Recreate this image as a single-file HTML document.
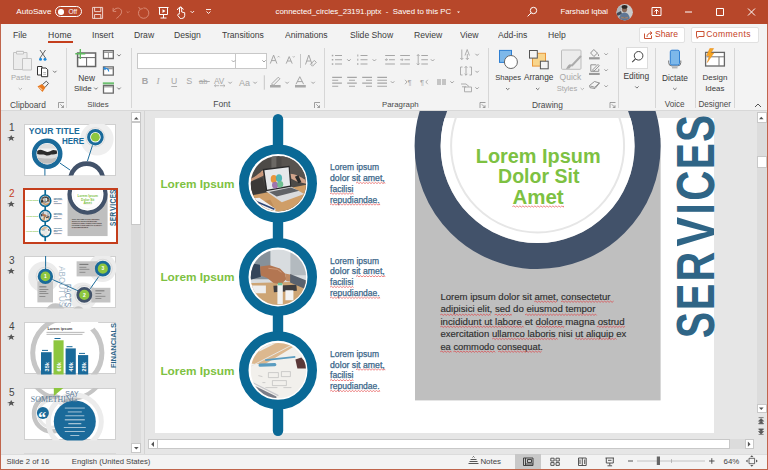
<!DOCTYPE html>
<html><head><meta charset="utf-8">
<style>
*{box-sizing:border-box;margin:0;padding:0}
html,body{width:768px;height:470px;overflow:hidden;background:#e6e6e6;font-family:"Liberation Sans",sans-serif;position:relative}
.a{position:absolute}
.t{position:absolute;white-space:nowrap;line-height:1}
svg{position:absolute;overflow:visible}
#title{left:0;top:0;width:768px;height:24px;background:#b7472a}
#tabs{left:1px;top:24px;width:766px;height:86px;background:#f3f3f3}
.tab{position:absolute;top:29.6px;font-size:9.7px;color:#3c3c3c;white-space:nowrap;line-height:1;transform:scaleX(0.89);transform-origin:0 0}
.grp{position:absolute;top:101px;font-size:8.3px;color:#555}
.sep{position:absolute;width:1px;background:#d6d6d6;top:48px;height:60px}
.rb{position:absolute;font-size:8.3px;color:#333;white-space:nowrap;line-height:1}
.dis{color:#a8a8a8}
</style></head><body>
<!-- window borders -->
<div class="a" style="left:0;top:0;width:1px;height:470px;background:#c0654c"></div>
<div class="a" style="right:0;top:0;width:1px;height:470px;background:#c0654c"></div>
<div class="a" style="left:0;top:469px;width:768px;height:1px;background:#c0654c"></div>

<div id="title" class="a"></div>
<div id="tabs" class="a"></div>


<!-- title bar content -->
<div class="t" style="left:16.3px;top:8.3px;font-size:8.1px;color:#fff">AutoSave</div>
<div class="a" style="left:55px;top:6px;width:27px;height:11px;border:1px solid #fff;border-radius:6px"></div>
<div class="a" style="left:58.4px;top:9.3px;width:5.3px;height:5.3px;background:#fff;border-radius:50%"></div>
<div class="t" style="left:68.6px;top:8.6px;font-size:6.6px;color:#fff;letter-spacing:-0.1px">Off</div>
<svg style="left:0;top:0" width="768" height="24">
 <g fill="none" stroke="#f4e2dc" stroke-width="0.9">
  <path d="M92.6 7.4h10v11h-10z"/>
  <path d="M94.6 7.4v4.2h6.2v-4.2"/>
  <path d="M94.6 18.4v-3.9h6.2v3.9"/>
 </g>
 <g fill="none" stroke="#d98a74" stroke-width="1">
  <path d="M113 11.2c2-3.5 6.5-4.2 8.2-1.2c1.3 2.4-0.5 5.5-4.8 8.4"/>
  <path d="M113.2 7.9l-0.2 3.3l3.2 0.3"/>
  <path d="M126.6 11.3l1.4 1.4l1.4-1.4" stroke-width="0.8"/>
  <path d="M140.2 9.2a5.2 5.2 0 1 0 3.2-1.3"/>
  <path d="M138.6 7l1.6 2.2l2.6-0.6"/>
 </g>
 <g fill="none" stroke="#fff" stroke-width="1">
  <path d="M158.5 7.5h10M159.5 7.5v7h8v-7M163.5 14.5v3.5M160.5 18h6"/>
  <path d="M162.5 9.2v3.8l3-1.9z" fill="#fff" stroke="none"/>
  <path d="M179.5 12.5v-4.5a1.1 1.1 0 0 1 2.2 0v4l3 0.7v3a3 3 0 0 1-3 2.8h-1.5l-2.5-3.2a0.9 0.9 0 0 1 1.4-1z"/>
  <path d="M177.2 10a3.4 3.4 0 0 1 6.3-0.5"/>
  <path d="M190.5 11l1.8 1.8l1.8-1.8" stroke-width="0.9"/>
  <path d="M206 9.5h5M206.5 11.5l2 2l2-2" stroke-width="0.9"/>
 </g>
 <g fill="none" stroke="#fff" stroke-width="1">
  <circle cx="533.5" cy="10.5" r="3.2"/>
  <path d="M531.2 12.8l-3.6 3.6"/>
  <path d="M652 7.5h9v8h-9z"/>
  <path d="M656.5 14v-4.5M654.5 11.5l2-2l2 2"/>
  <path d="M685 12h7"/>
  <path d="M716.5 8.5h7v7h-7z"/>
  <path d="M748 8.5l7 7M755 8.5l-7 7"/>
  <path d="M457 11.5h3l-1.5 1.6z" fill="#fff" stroke="none"/>
 </g>
 
</svg>
<svg style="left:0;top:0" width="768" height="24">
 <defs><clipPath id="av"><circle cx="624.7" cy="12.25" r="8.2"/></clipPath></defs>
 <g clip-path="url(#av)">
  <rect x="616" y="4" width="18" height="17" fill="#c9cacb"/>
  <rect x="616" y="4" width="5" height="17" fill="#aeb3b8"/>
  <path d="M617 13l4-2l1 3l-5 2z" fill="#3f4a58"/>
  <ellipse cx="624.5" cy="9.2" rx="2.6" ry="3" fill="#8a6a5a"/>
  <ellipse cx="624.5" cy="6.9" rx="3" ry="1.8" fill="#2a2624"/>
  <path d="M619 21c0-5 2-8.5 5.5-8.5s5.5 3.5 5.5 8.5z" fill="#5f7694"/>
  <path d="M621 17.5c2 0.5 5 0.5 7 0" stroke="#9a8070" stroke-width="1.3"/>
 </g>
</svg>
<div class="t" style="left:275.5px;top:8px;font-size:7.85px;color:#fff">connected_circles_23191.pptx&nbsp; - &nbsp;Saved to this PC</div>
<div class="t" style="left:560.4px;top:8px;font-size:7.8px;color:#fff">Farshad Iqbal</div>

<!-- tabs -->
<div class="tab" style="left:12.5px">File</div>
<div class="tab" style="left:47.5px;color:#333;letter-spacing:0.25px">Home</div>
<div class="a" style="left:47.5px;top:41px;width:25.5px;height:2px;background:#c43e1c"></div>
<div class="tab" style="left:91.8px">Insert</div>
<div class="tab" style="left:133.8px">Draw</div>
<div class="tab" style="left:173.8px">Design</div>
<div class="tab" style="left:221.5px">Transitions</div>
<div class="tab" style="left:285px">Animations</div>
<div class="tab" style="left:350px">Slide Show</div>
<div class="tab" style="left:413.5px">Review</div>
<div class="tab" style="left:459.8px">View</div>
<div class="tab" style="left:498.2px">Add-ins</div>
<div class="tab" style="left:548.2px">Help</div>
<div class="a" style="left:638.5px;top:26.5px;width:46px;height:16px;background:#fff;border:1px solid #e1e1e1;border-radius:2px"></div>
<div class="a" style="left:690.5px;top:26.5px;width:68px;height:16px;background:#fff;border:1px solid #e1e1e1;border-radius:2px"></div>
<div class="t" style="left:655px;top:30px;font-size:8.6px;color:#c43e1c">Share</div>
<div class="t" style="left:706.2px;top:30px;font-size:8.6px;letter-spacing:0.4px;color:#c43e1c">Comments</div>
<svg style="left:0;top:0" width="768" height="50">
 <g fill="none" stroke="#c43e1c" stroke-width="0.9">
  <path d="M644.5 33.5v5h7v-3"/>
  <path d="M647 37c0-2.5 1.5-4 4.5-4M650 31.5l2 1.5l-2 1.8"/>
  <path d="M696.5 31.5h7.5v5h-5l-2 1.8v-1.8h-0.5z"/>
 </g>
</svg>


<!-- ribbon: separators -->
<div class="sep" style="left:66px"></div>
<div class="sep" style="left:131px"></div>
<div class="sep" style="left:323.5px"></div>
<div class="sep" style="left:488px"></div>
<div class="sep" style="left:618px"></div>
<div class="sep" style="left:655px"></div>
<div class="sep" style="left:694.5px"></div>
<div class="sep" style="left:734px"></div>
<!-- group labels -->
<div class="rb" style="left:10.00px;top:100.62px;font-size:8.37px;color:#4a4a4a">Clipboard</div>
<div class="rb" style="left:87.23px;top:101.03px;font-size:7.89px;color:#4a4a4a">Slides</div>
<div class="rb" style="left:213.24px;top:100.45px;font-size:8.57px;color:#4a4a4a">Font</div>
<div class="rb" style="left:382.03px;top:101.06px;font-size:7.85px;color:#4a4a4a">Paragraph</div>
<div class="rb" style="left:531.99px;top:100.57px;font-size:8.43px;color:#4a4a4a">Drawing</div>
<div class="rb" style="left:664.71px;top:100.81px;font-size:8.14px;color:#4a4a4a">Voice</div>
<div class="rb" style="left:698.41px;top:100.81px;font-size:8.15px;color:#4a4a4a">Designer</div>
<div class="rb" style="left:10.94px;top:74.11px;font-size:7.67px;color:#a8a8a8">Paste</div>
<div class="rb" style="left:78.30px;top:73.50px;font-size:8.39px;color:#3a3a3a">New</div>
<div class="rb" style="left:73.92px;top:84.79px;font-size:8.05px;color:#3a3a3a">Slide</div>
<div class="rb" style="left:495.24px;top:74.14px;font-size:7.64px;color:#3a3a3a">Shapes</div>
<div class="rb" style="left:524.00px;top:73.61px;font-size:8.26px;color:#3a3a3a">Arrange</div>
<div class="rb" style="left:559.59px;top:73.38px;font-size:8.53px;color:#a8a8a8">Quick</div>
<div class="rb" style="left:556.65px;top:85.30px;font-size:7.57px;color:#a8a8a8">Styles</div>
<div class="rb" style="left:623.49px;top:72.46px;font-size:8.44px;color:#3a3a3a">Editing</div>
<div class="rb" style="left:661.90px;top:73.54px;font-size:8.35px;color:#3a3a3a">Dictate</div>
<div class="rb" style="left:702.52px;top:73.86px;font-size:7.97px;color:#3a3a3a">Design</div>
<div class="rb" style="left:705.13px;top:85.06px;font-size:7.85px;color:#3a3a3a">Ideas</div>
<!-- clipboard -->
<!-- font boxes -->
<div class="a" style="left:136.5px;top:53px;width:99px;height:15.5px;background:#fff;border:1px solid #c8c8c8"></div>
<div class="a" style="left:235px;top:53px;width:31.5px;height:15.5px;background:#fff;border:1px solid #c8c8c8"></div>
<!-- editing box -->
<div class="a" style="left:626px;top:47px;width:21.5px;height:21.5px;background:#fff;border:1px solid #dcdcdc"></div>
<svg style="left:0;top:44px" width="768" height="66">
 <g transform="translate(0,-44)">
 <!-- dropdown arrows (small chevrons) -->
 <g fill="none" stroke="#666" stroke-width="0.9">
  <path d="M18.6 88.0l1.7 1.7l1.7-1.7" stroke="#b0b0b0"/>
  <path d="M53.1 70.8l1.7 1.7l1.7-1.7"/>
  <path d="M94.2 87.6l1.7 1.7l1.7-1.7"/>
  <path d="M117.3 54.4l1.7 1.7l1.7-1.7"/>
  <path d="M117.3 87.6l1.7 1.7l1.7-1.7"/>
  <path d="M506.0 88.0l1.7 1.7l1.7-1.7"/>
  <path d="M536.0 88.0l1.7 1.7l1.7-1.7"/>
  <path d="M580.6 88.0l1.7 1.7l1.7-1.7" stroke="#b0b0b0"/>
  <path d="M635.2 86.4l1.7 1.7l1.7-1.7"/>
  <path d="M673.2 88.0l1.7 1.7l1.7-1.7"/>
 </g>
 <g fill="none" stroke="#999" stroke-width="0.9">
  <path d="M231.8 60.3l1.7 1.7l1.7-1.7"/>
  <path d="M262.3 60.3l1.7 1.7l1.7-1.7"/>
  <path d="M228.4 81.8l1.7 1.7l1.7-1.7"/>
  <path d="M253.4 81.8l1.7 1.7l1.7-1.7"/>
  <path d="M285.4 81.8l1.7 1.7l1.7-1.7"/>
  <path d="M311.4 81.8l1.7 1.7l1.7-1.7"/>
  <path d="M347.2 59.3l1.7 1.7l1.7-1.7"/>
  <path d="M372.7 59.3l1.7 1.7l1.7-1.7"/>
  <path d="M430.9 59.3l1.7 1.7l1.7-1.7"/>
  <path d="M390.9 81.3l1.7 1.7l1.7-1.7"/>
  <path d="M450.4 81.3l1.7 1.7l1.7-1.7"/>
  <path d="M475.4 53.8l1.7 1.7l1.7-1.7"/>
  <path d="M475.4 70.8l1.7 1.7l1.7-1.7"/>
  <path d="M475.4 87.3l1.7 1.7l1.7-1.7"/>
  <path d="M604.4 53.3l1.7 1.7l1.7-1.7"/>
  <path d="M604.4 69.3l1.7 1.7l1.7-1.7"/>
  <path d="M604.4 85.3l1.7 1.7l1.7-1.7"/>
 </g>
 <!-- launchers -->
 <g fill="none" stroke="#888" stroke-width="0.8">
  <path d="M58.5 108v-5.5h5.5M60.3 104.3l3.2 3.2M63.5 105.3v2.2h-2.2"/>
  <path d="M314.5 108v-5.5h5.5M316.3 104.3l3.2 3.2M319.5 105.3v2.2h-2.2"/>
  <path d="M480 108v-5.5h5.5M481.8 104.3l3.2 3.2M485 105.3v2.2h-2.2"/>
  <path d="M610 108v-5.5h5.5M611.8 104.3l3.2 3.2M615 105.3v2.2h-2.2"/>

 </g>
 <path d="M755 107l3-3l3 3" fill="none" stroke="#555" stroke-width="1"/>

 <!-- paste -->
 <g fill="#ececec" stroke="#c4c4c4" stroke-width="1">
  <path d="M13.5 52.5h3v-1.2h7v1.2h3.5v17h-13.5z"/>
  <path d="M16.5 51.5h7v2.5h-7z" fill="#f3f3f3"/>
  <path d="M22.5 58.5h9v11.5h-9z" fill="#f0f0f0"/>
 </g>
 <!-- scissors -->
 <g fill="none" stroke="#555" stroke-width="0.9">
  <path d="M40 50l5.5 8M45.5 50l-5.5 8"/>
 </g>
 <circle cx="40.5" cy="59.3" r="1.5" fill="#1e88d8"/>
 <circle cx="45" cy="59.3" r="1.5" fill="#1e88d8"/>
 <!-- copy -->
 <g fill="#fff" stroke="#333" stroke-width="1">
  <path d="M37.5 66.5h4.5v8.5h-4.5z"/>
  <path d="M41.5 68h4.5l1.7 1.7v7h-6.2z"/>
 </g>
 <path d="M43.2 72.5h2.8M43.2 74.3h2.8" stroke="#888" stroke-width="0.6"/>
 <!-- format painter -->
 <path d="M37.5 86.5l4.5-2.5l3.5 3.5l-3 4.5z" fill="#e97b20"/>
 <path d="M39.6 87.3l2.6 2.6" stroke="#fff" stroke-width="0.8"/>
 <path d="M42.5 84.5l3.8-3.3l2.2 2.2l-3.3 3.8" fill="none" stroke="#444" stroke-width="0.9"/>

 <!-- new slide -->
 <path d="M77.6 53h18v13.5h-18z" fill="#fff" stroke="#666" stroke-width="1.5"/>
 <path d="M86.6 57.6v9M77.6 57.6h18" stroke="#666" stroke-width="1"/>
 <path d="M80.3 49v10M75.3 53.8h10" stroke="#5cb85c" stroke-width="1.4"/>
 <!-- layout -->
 <path d="M103.5 50.7h9.8v7.8h-9.8z" fill="#fff" stroke="#6a6a6a" stroke-width="1.3"/>
 <path d="M104 52.3h9" stroke="#9a9a9a" stroke-width="1.4"/>
 <path d="M108.4 53v5" stroke="#9a9a9a" stroke-width="1"/>
 <!-- reset -->
 <path d="M103.5 66.9h9.8v8.3h-9.8z" fill="#fff" stroke="#6a6a6a" stroke-width="1.3"/>
 <path d="M107 68.6h6" stroke="#9a9a9a" stroke-width="1.4"/>
 <path d="M104.2 68.6c2.2-0.8 4.5 0.3 4.5 3" stroke="#2b88d8" stroke-width="1.2" fill="none"/>
 <path d="M105.2 66.8l-1.5 1.9l2 1.2" stroke="#2b88d8" stroke-width="1.1" fill="none"/>
 <!-- section -->
 <path d="M103.5 85.3h9.8v7.8h-9.8z" fill="#fff" stroke="#6a6a6a" stroke-width="1.3"/>
 <path d="M104 86.8h9" stroke="#9a9a9a" stroke-width="1.2"/>
 <path d="M102.8 83.3h11.2" stroke="#6cc070" stroke-width="2"/>
 </g>
</svg>


<svg style="left:0;top:0" width="768" height="110">
 <!-- FONT group (disabled gray) -->
 <g fill="none" stroke="#a6a6a6" stroke-width="1">
  <!-- grow A -->
  <path d="M270.3 63.6l3.3-8.5l3.3 8.5M271.6 60.6h4"/>
  <path d="M277.6 57.3l1-1.1l1 1.1" stroke-width="0.8"/>
  <path d="M286.2 63.6l3-7l3 7M287.4 61h3.6"/>
  <path d="M292.8 56.3l0.9 1l0.9-1" stroke-width="0.8"/>
  <path d="M300.5 54v14" stroke="#c6c6c6"/>
  <path d="M305.5 64.5l3.3-9.5l3.3 9.5M306.8 61h4"/>
  <path d="M310.5 64.2l3.8-3.8l2 2l-3.8 3.8z"/>
  <path d="M264.3 75.3v14.4" stroke="#c6c6c6"/>
  <!-- highlighter -->
  <path d="M272 83.5l6.3-6.3l1.6 1.6l-6.3 6.3h-1.6z"/>
  <path d="M296 84.2l3.8-7.5l3.8 7.5M297.2 81.6h5.2"/>
  <!-- AV arrows -->
  <path d="M214.5 85.7h4.5M219.8 85.7h5M215.8 84.5l-1.3 1.2l1.3 1.2M223.6 84.5l1.3 1.2l-1.3 1.2" stroke-width="0.8"/>
  <path d="M171.3 86.5h5.8" stroke-width="0.9"/>
  <path d="M198.8 81.5h11" stroke-width="0.9"/>
 </g>
 <rect x="270" y="85" width="10.6" height="2.5" fill="#a8a8a8"/>
 <rect x="295" y="85" width="10.8" height="2.5" fill="#a8a8a8"/>
 <g font-family="Liberation Sans" fill="#a6a6a6">
  <text x="141.8" y="84.4" font-size="9" font-weight="700">B</text>
  <text x="156.4" y="84.4" font-size="9.2" font-style="italic" font-family="Liberation Serif">I</text>
  <text x="171" y="84.4" font-size="8.6">U</text>
  <text x="186.2" y="84.4" font-size="9">S</text>
  <text x="199" y="84.4" font-size="7.5">ab</text>
  <text x="214" y="83.6" font-size="8.2">AV</text>
  <text x="239" y="86" font-size="9">Aa</text>
 </g>
 <!-- PARAGRAPH group -->
 <g stroke="#a6a6a6" stroke-width="1.1" fill="none">
  <path d="M335 55.5h7M335 59.7h7M335 64h7"/>
  <path d="M360.5 55.5h7M360.5 59.7h7M360.5 64h7"/>
  <path d="M385.2 55.5h9.7M389 59.7h5.9M385.2 64h9.7"/>
  <path d="M400.2 55.5h9.7M404.5 59.7h5.4M400.2 64h9.7"/>
  <path d="M421.3 55.5h6.6M421.3 59.7h6.6M421.3 64h6.6"/>
  <path d="M332.2 77.4h9.7M332.2 80.2h6M332.2 83.1h9.7M332.2 86.3h6"/>
  <path d="M347.2 77.4h9.6M349 80.2h6M347.2 83.1h9.6M349 86.3h6"/>
  <path d="M362.2 77.4h9.8M366 80.2h6M362.2 83.1h9.8M366 86.3h6"/>
  <path d="M377.3 77.4h9.7M377.3 80.2h9.7M377.3 83.1h9.7M377.3 86.3h9.7"/>
 </g>
 <g fill="#a6a6a6">
  <rect x="331.8" y="54.8" width="1.5" height="1.5"/><rect x="331.8" y="59" width="1.5" height="1.5"/><rect x="331.8" y="63.3" width="1.5" height="1.5"/>
  <rect x="357.3" y="54.5" width="1" height="2"/><rect x="357.3" y="58.7" width="1" height="2"/><rect x="357.3" y="63" width="1" height="2"/>
 </g>
 <g stroke="#a6a6a6" stroke-width="0.9" fill="none">
  <path d="M388 59.7h-2.6M386.6 58.5l-1.2 1.2l1.2 1.2"/>
  <path d="M400.2 59.7h2.6M401.8 58.5l1.2 1.2l-1.2 1.2"/>
  <path d="M418.2 54.5v10.5M416.8 56l1.4-1.5l1.4 1.5M416.8 63.5l1.4 1.5l1.4-1.5"/>
  <path d="M405 79.8l2 2.2l-2 2.2"/>
  <path d="M427.8 79.8l-2 2.2l2 2.2"/>
  <path d="M461.8 49.5v10M460.3 58l1.5 1.6l1.5-1.6M467.3 54v5.5M465.8 58l1.5 1.6l1.5-1.6M465 55.5l2.2-6l2.2 6"/>
  <path d="M462.5 67h-2v8h2M469.5 67h2v8h-2M466 66.3v9M464.6 67.8l1.4-1.4l1.4 1.4M464.6 73.8l1.4 1.4l1.4-1.4"/>
  <path d="M461 84h5l3 2.5M462 86.8h4M464.5 87h7v4.8h-7z"/>
 </g>
 <g font-family="Liberation Sans" fill="#a6a6a6" font-size="7.5">
  <text x="407.5" y="85">¶</text>
  <text x="420" y="85">¶</text>
 </g>
 <g fill="#c4c4c4">
  <rect x="437" y="79" width="4" height="6"/><rect x="442" y="79" width="4" height="6"/>
 </g>
 <!-- DRAWING group -->
 <rect x="499.5" y="50.4" width="12" height="12" fill="#7db8ea" stroke="#2e7fd2" stroke-width="1"/>
 <circle cx="510.9" cy="62" r="6.5" fill="#fff" stroke="#666" stroke-width="1"/>
 <rect x="532.5" y="53.3" width="13" height="12.8" fill="#f8d58c" stroke="#e8963a" stroke-width="1"/>
 <rect x="529.5" y="50.5" width="7.8" height="7.6" fill="#f4f4f4" stroke="#555" stroke-width="1"/>
 <rect x="540.4" y="61.2" width="7.8" height="7.6" fill="#f4f4f4" stroke="#555" stroke-width="1"/>
 <rect x="561.5" y="50" width="19.5" height="19.3" rx="1" fill="#ececec" stroke="#bdbdbd" stroke-width="1"/>
 <path d="M580.5 56.5l-8.5 9" stroke="#ababab" stroke-width="2" fill="none" stroke-linecap="round"/>
 <path d="M572.3 64.8l-2.8 3.6l-3.5 0.6c1-1.6 1.6-3.6 3.6-4.8z" fill="#a8a8a8"/>
 <g fill="none" stroke="#888" stroke-width="0.9">
  <path d="M590.6 53l3.2-3.5l3.6 3.6l-3.5 3.4z"/>
  <path d="M597.5 53.5c0.8 0.6 1.2 1.4 1.1 2.5"/>
  <path d="M590.8 64.8h5.5M590.8 64.8v6.5h8v-2.5"/>
  <path d="M592.5 70l5.5-5.5l1.3 1.3l-5.5 5.5z"/>
  <path d="M589.5 85.5l5-4l5 1.5l-4.5 5.5l-5-0.8z"/>
  <path d="M590.3 86l4.5 1.3l4.6-4.4"/>
 </g>
 <rect x="589" y="57.2" width="10.7" height="2.2" fill="#999"/>
 <rect x="589" y="72.9" width="10.7" height="2.1" fill="#999"/>
 <!-- EDITING -->
 <circle cx="638.6" cy="55.8" r="4.3" fill="none" stroke="#444" stroke-width="1"/>
 <path d="M635.5 58.9l-3.3 3.3" stroke="#444" stroke-width="1.1"/>
 <!-- DICTATE -->
 <path d="M668.7 60.5v2.2a3.2 3.2 0 0 0 3.2 3.2h5.7a3.2 3.2 0 0 0 3.2-3.2v-2.2" fill="none" stroke="#666" stroke-width="0.9"/>
 <rect x="670.3" y="50.2" width="9.2" height="14.8" rx="1.6" fill="#7db8ea" stroke="#2e7fd2" stroke-width="1"/>
 <path d="M672 67.8h5.5" stroke="#999" stroke-width="1"/>
 <!-- DESIGN IDEAS -->
 <rect x="705.6" y="52.4" width="18.8" height="13.6" fill="#fff" stroke="#666" stroke-width="1.3"/>
 <path d="M706.5 56.8h17.5M719 56.8v9" stroke="#777" stroke-width="1"/>
 <path d="M709.8 48.5h3.8l-2.8 4.5h3l-6.5 9.5l2-6.8h-2.8z" fill="#f5a623" stroke="#e8891a" stroke-width="0.5"/>
</svg>
<div class="rb" style="left:495.5px;top:74.5px;display:none"></div>

<!-- workspace -->
<div class="a" style="left:1px;top:110px;width:766px;height:1px;background:#d8d8d8"></div>
<div class="a" style="left:144px;top:111px;width:1px;height:343px;background:#d4d4d4"></div>


<!-- main scrollbars -->
<div class="a" style="left:756.5px;top:112px;width:10px;height:292px;background:#dcdcdc"></div>
<div class="a" style="left:756.5px;top:112.4px;width:10px;height:10.3px;background:#fff;border:1px solid #c8c8c8"></div>
<div class="a" style="left:756.5px;top:155.7px;width:10px;height:12.8px;background:#fff;border:1px solid #c8c8c8"></div>
<div class="a" style="left:756.5px;top:403.9px;width:10px;height:9.6px;background:#fff;border:1px solid #c8c8c8"></div>
<div class="a" style="left:147.5px;top:439.2px;width:606px;height:10px;background:#dcdcdc"></div>
<div class="a" style="left:147.5px;top:439.2px;width:10px;height:10px;background:#fff;border:1px solid #c8c8c8"></div>
<div class="a" style="left:157.4px;top:439.2px;width:572.3px;height:10px;background:#fff;border:1px solid #c8c8c8"></div>
<div class="a" style="left:744.5px;top:439.2px;width:9px;height:10px;background:#fff;border:1px solid #c8c8c8"></div>
<svg style="left:0;top:0" width="768" height="470">
 <path d="M759 119.3l2.3-2.5l2.3 2.5z" fill="#555"/>
 <path d="M759 407.6l2.3 2.4l2.3-2.4z" fill="#555"/>
 <path d="M758.6 417.6h5M758.6 421.2l2.5-2.6l2.5 2.6zM758.6 423.8l2.5-2.6l2.5 2.6z" fill="#555" stroke="#555" stroke-width="0.7"/>
 <path d="M758.6 434.4h5M758.6 428.9l2.5 2.6l2.5-2.6zM758.6 431.5l2.5 2.6l2.5-2.6z" fill="#555" stroke="#555" stroke-width="0.7"/>
 <path d="M151.2 444.2l2.8-2.7v5.4z" fill="#555"/>
 <path d="M747.9 441.6l2.6 2.6l-2.6 2.6z" fill="#555"/>
</svg>

<!-- status bar -->
<div class="a" style="left:1px;top:454px;width:766px;height:15px;background:#f3f3f3;border-top:1px solid #dcdcdc"></div>



<!-- slide panel -->
<div class="a" style="left:1px;top:111px;width:143px;height:343px;overflow:hidden">
<div class="t" style="left:8.0px;top:12.2px;font-size:10px;color:#444">1</div>
<svg style="left:6.3px;top:24.2px" width="9" height="7"><path d="M4.2 0l1.1 2.1h2.4l-1.9 1.5l0.8 2.4l-2.4-1.4l-2.4 1.4l0.8-2.4l-1.9-1.5h2.4z" fill="#555"/><path d="M0 2.2l1.3 0.8M0.5 4l1.2-0.3" stroke="#aaa" stroke-width="0.5"/></svg>
<div class="t" style="left:8.0px;top:77.9px;font-size:10px;color:#c43e1c">2</div>
<svg style="left:6.3px;top:89.9px" width="9" height="7"><path d="M4.2 0l1.1 2.1h2.4l-1.9 1.5l0.8 2.4l-2.4-1.4l-2.4 1.4l0.8-2.4l-1.9-1.5h2.4z" fill="#555"/><path d="M0 2.2l1.3 0.8M0.5 4l1.2-0.3" stroke="#aaa" stroke-width="0.5"/></svg>
<div class="t" style="left:8.0px;top:144.5px;font-size:10px;color:#444">3</div>
<svg style="left:6.3px;top:156.5px" width="9" height="7"><path d="M4.2 0l1.1 2.1h2.4l-1.9 1.5l0.8 2.4l-2.4-1.4l-2.4 1.4l0.8-2.4l-1.9-1.5h2.4z" fill="#555"/><path d="M0 2.2l1.3 0.8M0.5 4l1.2-0.3" stroke="#aaa" stroke-width="0.5"/></svg>
<div class="t" style="left:8.0px;top:210.5px;font-size:10px;color:#444">4</div>
<svg style="left:6.3px;top:222.5px" width="9" height="7"><path d="M4.2 0l1.1 2.1h2.4l-1.9 1.5l0.8 2.4l-2.4-1.4l-2.4 1.4l0.8-2.4l-1.9-1.5h2.4z" fill="#555"/><path d="M0 2.2l1.3 0.8M0.5 4l1.2-0.3" stroke="#aaa" stroke-width="0.5"/></svg>
<div class="t" style="left:8.0px;top:276.5px;font-size:10px;color:#444">5</div>
<svg style="left:6.3px;top:288.5px" width="9" height="7"><path d="M4.2 0l1.1 2.1h2.4l-1.9 1.5l0.8 2.4l-2.4-1.4l-2.4 1.4l0.8-2.4l-1.9-1.5h2.4z" fill="#555"/><path d="M0 2.2l1.3 0.8M0.5 4l1.2-0.3" stroke="#aaa" stroke-width="0.5"/></svg>
<div class="t" style="left:8.0px;top:342.5px;font-size:10px;color:#444">6</div>
<svg style="left:6.3px;top:354.5px" width="9" height="7"><path d="M4.2 0l1.1 2.1h2.4l-1.9 1.5l0.8 2.4l-2.4-1.4l-2.4 1.4l0.8-2.4l-1.9-1.5h2.4z" fill="#555"/><path d="M0 2.2l1.3 0.8M0.5 4l1.2-0.3" stroke="#aaa" stroke-width="0.5"/></svg>
<div class="a" style="left:23.3px;top:12.6px;width:92.2px;height:52.6px;border:1px solid #d0d0d0;background:#fff"></div>
<div class="a" style="left:23.3px;top:144.6px;width:92.2px;height:52.6px;border:1px solid #d0d0d0;background:#fff"></div>
<div class="a" style="left:23.3px;top:210.6px;width:92.2px;height:52.6px;border:1px solid #d0d0d0;background:#fff"></div>
<div class="a" style="left:23.3px;top:276.6px;width:92.2px;height:52.6px;border:1px solid #d0d0d0;background:#fff"></div>
<div class="a" style="left:21.6px;top:76.9px;width:95.3px;height:56px;border:2px solid #c43e1c;background:#fff"></div>

<svg style="left:23.3px;top:12.6px" width="91.2" height="51.6" viewBox="0 0 91.2 51.6">
 <defs><clipPath id="t1c"><rect x="0" y="0" width="91.2" height="51.6"/></clipPath></defs>
 <g clip-path="url(#t1c)"><g transform="translate(-24.3,-123.6)">
  <circle cx="97.3" cy="138.5" r="16.6" fill="#efefef"/>
  <circle cx="95.7" cy="136.8" r="9.5" fill="none" stroke="#cfcfcf" stroke-width="0.6"/>
  <path d="M92.8 144.9L87.7 160.8" stroke="#1a6a9a" stroke-width="1"/>
  <path d="M60.3 162.7L70.5 169.7" stroke="#1a6a9a" stroke-width="1"/>
  <path d="M45.2 168L45.2 176" stroke="#1a6a9a" stroke-width="1"/>
  <circle cx="87" cy="179.6" r="16.4" fill="#fff" stroke="#42526a" stroke-width="4.6"/>
  <circle cx="95.7" cy="136.8" r="6.8" fill="#fff" stroke="#1a6a9a" stroke-width="3"/>
  <circle cx="95.7" cy="136.8" r="4.4" fill="#8dc63f"/>
  <circle cx="47.5" cy="153.4" r="13" fill="#fff" stroke="#1a6a9a" stroke-width="4.6"/>
  <clipPath id="t1p"><circle cx="47.5" cy="153.4" r="10.6"/></clipPath><g clip-path="url(#t1p)">
  <circle cx="47.5" cy="153.4" r="10.6" fill="#dedede"/>
  <path d="M37 148h21v4h-21z" fill="#f2f2f2"/>
  <path d="M37.5 150.5c2-1.5 4-1.5 6-0.5l4 1.5c2 0 4-1.5 6-2l3.5 0.5l0.5 3c-2 1-4 1.5-6 1c-2 1-4 1.5-6 0.5c-2-1-5 0-8-1z" fill="#2c2c2c"/>
  <path d="M38 157c5 1 12 2 19 0v6h-19z" fill="#bdbdbd"/></g>
  <text x="29" y="133.6" font-family="Liberation Sans" font-weight="700" font-size="9" fill="#1a6a9a" textLength="51" lengthAdjust="spacingAndGlyphs">YOUR TITLE</text>
  <text x="62.2" y="143.9" font-family="Liberation Sans" font-weight="700" font-size="9" fill="#1a6a9a" textLength="22.3" lengthAdjust="spacingAndGlyphs">HERE</text>
 </g></g>
</svg>

<svg style="left:23.6px;top:79px" width="91.3" height="51.4" viewBox="0 0 560 315">
 <defs><clipPath id="t2c"><rect x="0" y="0" width="560" height="315"/></clipPath></defs>
 <g clip-path="url(#t2c)"><use href="#slide2"/></g>
</svg>

<svg style="left:23.6px;top:144.6px" width="91.8" height="52.5" viewBox="0 0 91.8 52.5">
 <defs><clipPath id="t3c"><rect x="0" y="0" width="91.8" height="52.5"/></clipPath></defs>
 <g clip-path="url(#t3c)"><g transform="translate(-24.6,-255.6)">
  <circle cx="43.4" cy="276.5" r="15.5" fill="#ececec"/>
  <circle cx="102" cy="267.6" r="14" fill="#ececec"/>
  <circle cx="82.5" cy="296" r="14" fill="#ececec"/>
  <path d="M46 308.5a10 10 0 0 1 18 0z" fill="#c4c4c4"/>
  <path d="M73 308.5a6 6 0 0 1 10 0z" fill="#c4c4c4"/>
  <rect x="37" y="281" width="15.6" height="21" fill="#c4c4c4"/>
  <rect x="76.2" y="260.9" width="21.1" height="15.1" fill="#c4c4c4"/>
  <rect x="90.9" y="287.4" width="19.1" height="14.7" fill="#c4c4c4"/>
  <g fill="#6a6a6a"><rect x="39" y="286" width="7" height="0.9"/><rect x="39" y="289" width="9" height="0.6"/><rect x="39" y="291" width="7" height="0.6"/><rect x="39" y="293" width="9" height="0.6"/><rect x="39" y="296" width="6" height="0.6"/>
  <rect x="79" y="263.5" width="9" height="0.9"/><rect x="79" y="266.5" width="7" height="0.6"/><rect x="79" y="268.5" width="10" height="0.6"/><rect x="79" y="271.5" width="6" height="0.6"/>
  <rect x="95" y="290" width="9" height="0.9"/><rect x="95" y="293" width="6" height="0.6"/><rect x="95" y="295.5" width="10" height="0.6"/><rect x="95" y="298" width="6" height="0.6"/></g>
  <path d="M45.2 255.6V276M52 279.1L78.1 290.6M98.5 276L89.6 288.7" stroke="#1a6a9a" stroke-width="1"/>
  <text transform="translate(58.4,265.8) rotate(90)" font-family="Liberation Sans" font-size="8.8" fill="#a8bccc" textLength="41" lengthAdjust="spacingAndGlyphs">ABOUT US</text>
  <text transform="translate(64.5,283.6) rotate(90)" font-family="Liberation Sans" font-size="8.8" fill="#6f8ea8" textLength="23" lengthAdjust="spacingAndGlyphs">FACTS</text>
  <circle cx="45" cy="276" r="9.3" fill="none" stroke="#c8c8c8" stroke-width="0.5"/>
  <circle cx="83.9" cy="294.5" r="9.5" fill="none" stroke="#c8c8c8" stroke-width="0.5"/>
  <circle cx="102.4" cy="268.3" r="9.5" fill="none" stroke="#c8c8c8" stroke-width="0.5"/>
  <circle cx="45" cy="276" r="6.3" fill="#8dc63f" stroke="#1a6a9a" stroke-width="2.8"/>
  <circle cx="83.9" cy="294.5" r="6.5" fill="#8dc63f" stroke="#42526a" stroke-width="2.8"/>
  <circle cx="102.4" cy="268.3" r="6.5" fill="#8dc63f" stroke="#1a6a9a" stroke-width="2.8"/>
  <g font-family="Liberation Sans" font-weight="700" font-size="5" fill="#fff" text-anchor="middle">
   <text x="45" y="277.8">1</text><text x="83.9" y="296.3">2</text><text x="102.4" y="270.1">3</text>
  </g>
 </g></g>
</svg>

<svg style="left:23.5px;top:210.6px" width="91.8" height="52.5" viewBox="0 0 91.8 52.5">
 <defs><clipPath id="t4c"><rect x="0" y="0" width="91.8" height="52.5"/></clipPath></defs>
 <g clip-path="url(#t4c)"><g transform="translate(-24.5,-321.6)">
  <circle cx="66.8" cy="352.4" r="34.6" fill="none" stroke="#c6c6c6" stroke-width="5"/>
  <circle cx="84" cy="316" r="15" fill="#fff"/>
  <text x="46.9" y="330" font-family="Liberation Sans" font-weight="700" font-size="4" fill="#444">Lorem ipsum</text>
  <rect x="46" y="331.5" width="38" height="0.7" fill="#999"/>
  <rect x="46" y="333.5" width="36" height="0.7" fill="#999"/>
  <rect x="40.5" y="351.8" width="10.6" height="25" fill="#1a6a9a"/>
  <rect x="53" y="339.9" width="10.1" height="37" fill="#8dc63f"/>
  <rect x="65.1" y="348" width="10.2" height="29" fill="#1a6a9a"/>
  <rect x="77.5" y="354.7" width="10.2" height="22" fill="#1a6a9a"/>
  <g fill="#1a6a9a"><rect x="41.5" y="349.5" width="6" height="1"/><rect x="54" y="337.6" width="6" height="1"/><rect x="66" y="345.8" width="6" height="1"/><rect x="78.5" y="352.5" width="6" height="1"/></g>
  <g font-family="Liberation Sans" font-weight="700" font-size="5.5" fill="#fff">
   <text transform="translate(49,371) rotate(-90)">35k</text>
   <text transform="translate(61,371) rotate(-90)">60k</text>
   <text transform="translate(73,371) rotate(-90)">40k</text>
   <text transform="translate(85.5,371) rotate(-90)">28k</text>
  </g>
  <text transform="translate(115.3,367.7) rotate(-90)" font-family="Liberation Sans" font-weight="700" font-size="7.6" fill="#2e6589" textLength="45.2" lengthAdjust="spacingAndGlyphs">FINANCIALS</text>
 </g></g>
</svg>

<svg style="left:23.5px;top:276.6px" width="91.8" height="52.1" viewBox="0 0 91.8 52.1">
 <defs><clipPath id="t5c"><rect x="0" y="0" width="91.8" height="52.5"/></clipPath></defs>
 <g clip-path="url(#t5c)"><g transform="translate(-24.5,-387.6)">
  <circle cx="66" cy="356.4" r="43" fill="none" stroke="#c4c4c4" stroke-width="4"/>
  <circle cx="51.3" cy="413.3" r="17.8" fill="none" stroke="#c4c4c4" stroke-width="4.5"/>
  <circle cx="51.3" cy="413.3" r="13.5" fill="none" stroke="#e8e8e8" stroke-width="3"/>
  <circle cx="74.3" cy="421" r="26.5" fill="none" stroke="#ececec" stroke-width="5"/>
  <path d="M53.3 387.6h9.5l-9.5 7.9z" fill="#8dc63f"/>
  <circle cx="42.4" cy="412.7" r="6" fill="#1a6a9a"/>
  <text x="36.8" y="422.6" font-family="Liberation Serif" font-style="italic" font-weight="700" font-size="17" fill="#fff">“</text>
  <circle cx="74.3" cy="421" r="21" fill="#1a6a9a"/>
  <g fill="#dfe8ef"><rect x="64.3" y="407.3" width="20" height="0.7"/><rect x="67.3" y="411.2" width="14" height="0.7"/><rect x="64.8" y="415.1" width="19" height="0.7"/><rect x="64.3" y="419.0" width="20" height="0.9"/><rect x="67.8" y="422.9" width="13" height="0.9"/><rect x="63.3" y="426.8" width="22" height="0.7"/><rect x="64.3" y="430.7" width="20" height="0.7"/><rect x="69.8" y="434.6" width="9" height="0.7"/></g>
  <text x="64.7" y="395.5" font-family="Liberation Sans" font-size="7" fill="#5a7a98" textLength="13.4" lengthAdjust="spacingAndGlyphs">SAY</text>
  <text x="30.3" y="401.9" font-family="Liberation Serif" font-size="7.8" fill="#5a7a98" textLength="46.5" lengthAdjust="spacingAndGlyphs">SOMETHING</text>
 </g></g>
</svg>
<div class="a" style="left:23.3px;top:342px;width:92.2px;height:10px;border-top:1px solid #d8d8d8"></div>

<!-- panel scrollbar -->
<div class="a" style="left:130.3px;top:1px;width:10px;height:341px;background:#dcdcdc"></div>
<div class="a" style="left:130.3px;top:1.2px;width:10px;height:10px;background:#fff;border:1px solid #c8c8c8"></div>
<div class="a" style="left:130.3px;top:11px;width:10px;height:103px;background:#fff;border:1px solid #c8c8c8"></div>
<div class="a" style="left:130.3px;top:331.7px;width:10px;height:9.9px;background:#fff;border:1px solid #c8c8c8"></div>
<svg style="left:0;top:0" width="143" height="342">
 <path d="M133 8.5l2.3-2.5l2.3 2.5z" fill="#555"/>
 <path d="M133 336l2.3 2.5l2.3-2.5z" fill="#555"/>
</svg>
</div>

<!-- workspace clip -->
<div class="a" style="left:145px;top:111px;width:622px;height:341px;overflow:hidden">
 <div class="a" style="left:9.6px;top:7.3px;width:559.4px;height:314.8px;background:#fff"></div>
 <svg style="left:9px;top:7px" width="560" height="315" viewBox="0 0 560 315">
  <g id="slide2">
<defs>
 <clipPath id="pc"><circle cx="0" cy="0" r="27.7"/></clipPath>
</defs>
<rect x="261" y="20" width="245.6" height="262.4" fill="#bfbfbf"/>
<circle cx="383.6" cy="28" r="110" fill="none" stroke="#42526a" stroke-width="26"/>
<clipPath id="sc"><rect x="0" y="0" width="560" height="315"/></clipPath>
<g clip-path="url(#sc)"><circle cx="383.6" cy="28" r="97" fill="#fff"/>
<circle cx="383.6" cy="28" r="86.5" fill="none" stroke="#e6e6e6" stroke-width="2"/></g>
<rect x="118.8" y="-4" width="10.4" height="322" rx="5.2" fill="#0a6996"/>
<circle cx="124" cy="65.4" r="34.25" fill="#fff" stroke="#0a6996" stroke-width="9.5"/>
<circle cx="124" cy="159.0" r="34.25" fill="#fff" stroke="#0a6996" stroke-width="9.5"/>
<circle cx="124" cy="252.3" r="34.25" fill="#fff" stroke="#0a6996" stroke-width="9.5"/>
<g transform="translate(124.4,65.7)"><g clip-path="url(#pc)">
 <rect x="-28" y="-28" width="56" height="56" fill="#4d4a47"/>
 <path d="M-7 -28h5v26h-5z" fill="#6b6864"/>
 <path d="M3 -28h25v22h-25z" fill="#57534f"/>
 <path d="M-28 -2l12 -4l4 14l-16 4z" fill="#3b3937"/>
 <path d="M-28 -5c4-1 8-5 12-8c2-1 4-1 4 1l-3 4l-13 6z" fill="#c8977a"/>
 <path d="M-17 -12l3-1.5M-16 -10l3.5-1" stroke="#d9ae92" stroke-width="0.8"/>
 <path d="M-28 12l56 -11v27h-56z" fill="#cf9e68"/>
 <path d="M-28 20l20 -4l6 12h-20z" fill="#c08d58"/>
 <path d="M12 -10c4 0 10 3 15 6l1 4l-9 -2l-6 -3z" fill="#d2a58c"/>
 <path d="M16.5 -7l3.5 -1.5l3 7l-3 1z" fill="#2b2b2b"/>
 <path d="M-15.7 -14.7l26.8 -3.2l1.9 21l-25.5 4.5z" fill="#2a2a2b"/>
 <path d="M-14 -13.4l24.2 -3l1.5 18.3l-22.9 4.2z" fill="#e6e8ea"/>
 <ellipse cx="-4.6" cy="-4.8" rx="3.1" ry="3.9" fill="#e8963c"/>
 <ellipse cx="0.6" cy="-5.6" rx="3.1" ry="3.9" fill="#45b0b0" opacity="0.92"/>
 <ellipse cx="-3.3" cy="1.4" rx="3.1" ry="3.4" fill="#9a6aa8" opacity="0.92"/>
 <ellipse cx="1.8" cy="0.6" rx="3" ry="3.3" fill="#66bb88" opacity="0.92"/>
 <path d="M-12.5 7.6l25.5 -4.5l12.8 7.1l-22.4 8.3z" fill="#d9dadc"/>
 <path d="M-9.3 8.3l21.7 -4.5l8.3 3.2l-22.4 5.7z" fill="#606266"/>
 <path d="M-28 15l9 -1l16 11v4h-25z" fill="#f0f0f2"/>
 <path d="M-24 17l20 8.5" stroke="#2c4677" stroke-width="1.6"/>
</g></g>
<g transform="translate(124.4,159.3)"><g clip-path="url(#pc)">
 <rect x="-28" y="-28" width="56" height="56" fill="#d8dcdf"/>
 <path d="M-28 -28h20v30h-20z" fill="#86919a"/>
 <path d="M12 -28h16v26h-16z" fill="#b3babf"/>
 <path d="M-28 5.8l56 -1.5v24h-56z" fill="#cda575"/>
 <path d="M-28 8.3h15.5v7.7h-15.5z" fill="#eeeeee"/>
 <path d="M-5 8.5l23 -1l0.5 6l-23 1.5z" fill="#3d3d3f"/>
 <path d="M-28 -14l9.5 1.5l1 12l-10.5 3z" fill="#34455a"/>
 <path d="M-18.3 -10.8l9.6 -1.3l10.2 3.2l5.1 5.1l1.3 5.7l-5.1 5.1l-7.7 -1.2l-6.3 -5.1l-6.4 -2.6z" fill="#b37652"/>
 <path d="M-10 -9l9 1l4 3" stroke="#d09a78" stroke-width="1" fill="none"/>
 <path d="M6.6 -3.8l6.4 1.3v7l-5.1 -0.7z" fill="#c08a63"/>
 <path d="M11.7 -3.2l16.3 6.4v9l-16.3 -7z" fill="#59626e"/>
 <rect x="-1" y="7" width="5.4" height="20" fill="#f1f2f1"/>
 <rect x="-0.5" y="5.5" width="4.4" height="2.5" fill="#6ec6a0"/>
 <path d="M7 13h8v10h-8z" fill="#f4f4f4"/>
</g></g>
<g transform="translate(124.4,252.60000000000002)"><g clip-path="url(#pc)">
 <rect x="-28" y="-28" width="56" height="56" fill="#f2f0ec"/>
 <path d="M-28 -28h50l-36 22l-14 -1z" fill="#dcb88f"/>
 <path d="M-24 -24l14 -5l7 2l-16 8z" fill="#eeedea"/>
 <path d="M-28 -4l50 -26" stroke="#e9e6e1" stroke-width="1"/>
 <path d="M-13.2 -10.5l30.1 -3.2" stroke="#5b9cc0" stroke-width="1.8"/>
 <path d="M-18.3 -5.4l14.7 -0.6" stroke="#5b9cc0" stroke-width="3.2" stroke-linecap="round"/>
 <path d="M17 -11l6 -2l5 6v5l-9 0z" fill="#5a3838"/>
 <g stroke="#b4b4b4" stroke-width="0.6" fill="none">
  <path d="M-10 2h10v5h-10zM3 1h9v5h-9zM-6 10h14v5h-14zM-13 17h12M5 17h8M-20 5l4 1M-16 12h3"/>
 </g>
 <path d="M-28 13l26 13v4h-26z" fill="#7b7d88"/>
 <path d="M-28 11l28 14" stroke="#c8c8cc" stroke-width="1.2"/>
</g></g>
<g font-family="Liberation Sans" font-weight="700" fill="#7dc142">
<text x="6.4" y="69.8" font-size="11.8" textLength="74.2" lengthAdjust="spacingAndGlyphs">Lorem Ipsum</text>
<text x="6.4" y="163.1" font-size="11.8" textLength="74.2" lengthAdjust="spacingAndGlyphs">Lorem Ipsum</text>
<text x="6.4" y="256.5" font-size="11.8" textLength="74.2" lengthAdjust="spacingAndGlyphs">Lorem Ipsum</text>
<text x="321.8" y="45" font-size="19.5" textLength="124.8" lengthAdjust="spacingAndGlyphs">Lorem Ipsum</text>
<text x="344.1" y="65.2" font-size="19.5" textLength="81.3" lengthAdjust="spacingAndGlyphs">Dolor Sit</text>
<text x="358.4" y="86" font-size="19.5" textLength="51.2" lengthAdjust="spacingAndGlyphs">Amet</text>
</g>
<path d="M358.4 88.5L359.9 87.9L361.4 89.1L362.9 87.9L364.4 89.1L365.9 87.9L367.4 89.1L368.9 87.9L370.4 89.1L371.9 87.9L373.4 89.1L374.9 87.9L376.4 89.1L377.9 87.9L379.4 89.1L380.9 87.9L382.4 89.1L383.9 87.9L385.4 89.1L386.9 87.9L388.4 89.1L389.9 87.9L391.4 89.1L392.9 87.9L394.4 89.1L395.9 87.9L397.4 89.1L398.9 87.9L400.4 89.1L401.9 87.9L403.4 89.1L404.9 87.9L406.4 89.1L407.9 87.9L409.4 89.1L409.6 87.9" fill="none" stroke="#e23b3b" stroke-width="0.6"/><g font-family="Liberation Sans" fill="#3a6689" stroke="#3a6689" stroke-width="0.25" font-size="8.5">
<text x="176" y="52.20" textLength="49" lengthAdjust="spacingAndGlyphs">Lorem ipsum</text>
<text x="176" y="62.97" textLength="54.8" lengthAdjust="spacingAndGlyphs">dolor sit amet,</text>
<text x="176" y="73.74" textLength="23.4" lengthAdjust="spacingAndGlyphs">facilisi</text>
<text x="176" y="84.51" textLength="49.7" lengthAdjust="spacingAndGlyphs">repudiandae.</text>
<text x="176" y="145.50" textLength="49" lengthAdjust="spacingAndGlyphs">Lorem ipsum</text>
<text x="176" y="156.27" textLength="54.8" lengthAdjust="spacingAndGlyphs">dolor sit amet,</text>
<text x="176" y="167.04" textLength="23.4" lengthAdjust="spacingAndGlyphs">facilisi</text>
<text x="176" y="177.81" textLength="49.7" lengthAdjust="spacingAndGlyphs">repudiandae.</text>
<text x="176" y="238.80" textLength="49" lengthAdjust="spacingAndGlyphs">Lorem ipsum</text>
<text x="176" y="249.57" textLength="54.8" lengthAdjust="spacingAndGlyphs">dolor sit amet,</text>
<text x="176" y="260.34" textLength="23.4" lengthAdjust="spacingAndGlyphs">facilisi</text>
<text x="176" y="271.11" textLength="49.7" lengthAdjust="spacingAndGlyphs">repudiandae.</text>
</g>
<path d="M202.0 65.0L203.5 64.4L205.0 65.6L206.5 64.4L208.0 65.6L209.5 64.4L211.0 65.6L212.5 64.4L214.0 65.6L215.5 64.4L217.0 65.6L218.5 64.4L220.0 65.6L221.5 64.4L223.0 65.6L224.5 64.4L226.0 65.6L227.5 64.4L229.0 65.6L230.5 64.4L231.0 65.6" fill="none" stroke="#e23b3b" stroke-width="0.6"/><path d="M176.0 75.7L177.5 75.1L179.0 76.3L180.5 75.1L182.0 76.3L183.5 75.1L185.0 76.3L186.5 75.1L188.0 76.3L189.5 75.1L191.0 76.3L192.5 75.1L194.0 76.3L195.5 75.1L197.0 76.3L198.5 75.1L199.4 76.3" fill="none" stroke="#e23b3b" stroke-width="0.6"/><path d="M176.0 86.5L177.5 85.9L179.0 87.1L180.5 85.9L182.0 87.1L183.5 85.9L185.0 87.1L186.5 85.9L188.0 87.1L189.5 85.9L191.0 87.1L192.5 85.9L194.0 87.1L195.5 85.9L197.0 87.1L198.5 85.9L200.0 87.1L201.5 85.9L203.0 87.1L204.5 85.9L206.0 87.1L207.5 85.9L209.0 87.1L210.5 85.9L212.0 87.1L213.5 85.9L215.0 87.1L216.5 85.9L218.0 87.1L219.5 85.9L221.0 87.1L222.5 85.9L224.0 87.1L225.5 85.9L225.7 87.1" fill="none" stroke="#e23b3b" stroke-width="0.6"/><path d="M202.0 158.3L203.5 157.7L205.0 158.9L206.5 157.7L208.0 158.9L209.5 157.7L211.0 158.9L212.5 157.7L214.0 158.9L215.5 157.7L217.0 158.9L218.5 157.7L220.0 158.9L221.5 157.7L223.0 158.9L224.5 157.7L226.0 158.9L227.5 157.7L229.0 158.9L230.5 157.7L231.0 158.9" fill="none" stroke="#e23b3b" stroke-width="0.6"/><path d="M176.0 169.0L177.5 168.4L179.0 169.6L180.5 168.4L182.0 169.6L183.5 168.4L185.0 169.6L186.5 168.4L188.0 169.6L189.5 168.4L191.0 169.6L192.5 168.4L194.0 169.6L195.5 168.4L197.0 169.6L198.5 168.4L199.4 169.6" fill="none" stroke="#e23b3b" stroke-width="0.6"/><path d="M176.0 179.8L177.5 179.2L179.0 180.4L180.5 179.2L182.0 180.4L183.5 179.2L185.0 180.4L186.5 179.2L188.0 180.4L189.5 179.2L191.0 180.4L192.5 179.2L194.0 180.4L195.5 179.2L197.0 180.4L198.5 179.2L200.0 180.4L201.5 179.2L203.0 180.4L204.5 179.2L206.0 180.4L207.5 179.2L209.0 180.4L210.5 179.2L212.0 180.4L213.5 179.2L215.0 180.4L216.5 179.2L218.0 180.4L219.5 179.2L221.0 180.4L222.5 179.2L224.0 180.4L225.5 179.2L225.7 180.4" fill="none" stroke="#e23b3b" stroke-width="0.6"/><path d="M202.0 251.6L203.5 251.0L205.0 252.2L206.5 251.0L208.0 252.2L209.5 251.0L211.0 252.2L212.5 251.0L214.0 252.2L215.5 251.0L217.0 252.2L218.5 251.0L220.0 252.2L221.5 251.0L223.0 252.2L224.5 251.0L226.0 252.2L227.5 251.0L229.0 252.2L230.5 251.0L231.0 252.2" fill="none" stroke="#e23b3b" stroke-width="0.6"/><path d="M176.0 262.3L177.5 261.7L179.0 262.9L180.5 261.7L182.0 262.9L183.5 261.7L185.0 262.9L186.5 261.7L188.0 262.9L189.5 261.7L191.0 262.9L192.5 261.7L194.0 262.9L195.5 261.7L197.0 262.9L198.5 261.7L199.4 262.9" fill="none" stroke="#e23b3b" stroke-width="0.6"/><path d="M176.0 273.1L177.5 272.5L179.0 273.7L180.5 272.5L182.0 273.7L183.5 272.5L185.0 273.7L186.5 272.5L188.0 273.7L189.5 272.5L191.0 273.7L192.5 272.5L194.0 273.7L195.5 272.5L197.0 273.7L198.5 272.5L200.0 273.7L201.5 272.5L203.0 273.7L204.5 272.5L206.0 273.7L207.5 272.5L209.0 273.7L210.5 272.5L212.0 273.7L213.5 272.5L215.0 273.7L216.5 272.5L218.0 273.7L219.5 272.5L221.0 273.7L222.5 272.5L224.0 273.7L225.5 272.5L225.7 273.7" fill="none" stroke="#e23b3b" stroke-width="0.6"/><g font-family="Liberation Sans" fill="#2e2e2e" stroke="#2e2e2e" stroke-width="0.15" font-size="9.5">
<text x="286.4" y="181.70" textLength="170.1" lengthAdjust="spacingAndGlyphs">Lorem ipsum dolor sit amet, consectetur</text>
<text x="286.4" y="194.20" textLength="155" lengthAdjust="spacingAndGlyphs">adipisici elit, sed do eiusmod tempor</text>
<text x="286.4" y="206.70" textLength="184.3" lengthAdjust="spacingAndGlyphs">incididunt ut labore et dolore magna ostrud</text>
<text x="286.4" y="219.20" textLength="185.9" lengthAdjust="spacingAndGlyphs">exercitation ullamco laboris nisi ut aliquip ex</text>
<text x="286.4" y="231.70" textLength="102.5" lengthAdjust="spacingAndGlyphs">ea commodo consequat.</text>
</g>
<path d="M380.3 183.7L381.8 183.1L383.3 184.3L384.8 183.1L386.3 184.3L387.8 183.1L389.3 184.3L390.8 183.1L392.3 184.3L393.8 183.1L395.3 184.3L396.8 183.1L398.3 184.3L399.8 183.1L401.3 184.3L402.8 183.1 M407.1 183.7L408.6 183.1L410.1 184.3L411.6 183.1L413.1 184.3L414.6 183.1L416.1 184.3L417.6 183.1L419.1 184.3L420.6 183.1L422.1 184.3L423.6 183.1L425.1 184.3L426.6 183.1L428.1 184.3L429.6 183.1L431.1 184.3L432.6 183.1L434.1 184.3L435.6 183.1L437.1 184.3L438.6 183.1L440.1 184.3L441.6 183.1L443.1 184.3L444.6 183.1L446.1 184.3L447.6 183.1L449.1 184.3L450.6 183.1L452.1 184.3L453.6 183.1L455.1 184.3L456.6 183.1L458.1 184.3L459.6 183.1 M286.3 196.8L287.8 196.2L289.3 197.4L290.8 196.2L292.3 197.4L293.8 196.2L295.3 197.4L296.8 196.2L298.3 197.4L299.8 196.2L301.3 197.4L302.8 196.2L304.3 197.4L305.8 196.2L307.3 197.4L308.8 196.2L310.3 197.4L311.8 196.2L313.3 197.4L314.8 196.2L316.3 197.4L317.8 196.2L319.3 197.4L320.8 196.2L322.3 197.4L323.8 196.2L325.3 197.4L326.8 196.2L328.3 197.4L329.8 196.2L331.3 197.4L332.8 196.2L334.3 197.4L335.8 196.2L336.3 197.4 M340.6 196.8L342.1 196.2L343.6 197.4L345.1 196.2L346.6 197.4L348.1 196.2L349.6 197.4L351.1 196.2L352.6 197.4L354.1 196.2L355.6 197.4L357.1 196.2L357.3 197.4 M371.0 196.8L372.5 196.2L374.0 197.4L375.5 196.2L377.0 197.4L378.5 196.2L380.0 197.4L381.5 196.2L383.0 197.4L384.5 196.2L386.0 197.4L387.5 196.2L389.0 197.4L390.5 196.2L392.0 197.4L393.5 196.2L395.0 197.4L396.5 196.2L398.0 197.4L399.5 196.2L401.0 197.4L402.5 196.2L404.0 197.4L405.5 196.2L407.0 197.4L408.5 196.2L410.0 197.4L411.5 196.2L413.0 197.4L414.5 196.2L416.0 197.4L417.5 196.2L419.0 197.4L420.5 196.2L422.0 197.4L423.5 196.2L425.0 197.4L426.5 196.2L428.0 197.4L429.5 196.2L431.0 197.4L432.5 196.2L434.0 197.4L435.5 196.2L437.0 197.4L438.5 196.2L440.0 197.4L441.5 196.2L442.6 197.4 M286.3 208.8L287.8 208.2L289.3 209.4L290.8 208.2L292.3 209.4L293.8 208.2L295.3 209.4L296.8 208.2L298.3 209.4L299.8 208.2L301.3 209.4L302.8 208.2L304.3 209.4L305.8 208.2L307.3 209.4L308.8 208.2L310.3 209.4L311.8 208.2L313.3 209.4L314.8 208.2L316.3 209.4L317.8 208.2L319.3 209.4L320.8 208.2L322.3 209.4L323.8 208.2L325.3 209.4L326.8 208.2L328.3 209.4L329.8 208.2L331.3 209.4L332.8 208.2L334.3 209.4L335.8 208.2L337.3 209.4L338.8 208.2L340.3 209.4L341.8 208.2L343.3 209.4L344.8 208.2L346.3 209.4L347.8 208.2L349.3 209.4L350.8 208.2L352.3 209.4L353.8 208.2L355.3 209.4L356.8 208.2L358.3 209.4L359.8 208.2L361.3 209.4L362.8 208.2L364.3 209.4L365.8 208.2L367.3 209.4L368.8 208.2L369.6 209.4 M382.5 208.8L384.0 208.2L385.5 209.4L387.0 208.2L388.5 209.4L390.0 208.2L391.5 209.4L393.0 208.2L394.5 209.4L396.0 208.2L397.5 209.4L399.0 208.2L400.5 209.4L402.0 208.2L403.5 209.4L405.0 208.2L406.5 209.4L408.0 208.2L409.5 209.4L410.0 208.2 M442.9 208.8L444.4 208.2L445.9 209.4L447.4 208.2L448.9 209.4L450.4 208.2L451.9 209.4L453.4 208.2L454.9 209.4L456.4 208.2L457.9 209.4L459.4 208.2L460.9 209.4L462.4 208.2L463.9 209.4L465.4 208.2L466.9 209.4L468.4 208.2L469.9 209.4L470.8 208.2 M338.2 220.9L339.7 220.3L341.2 221.5L342.7 220.3L344.2 221.5L345.7 220.3L347.2 221.5L348.7 220.3L350.2 221.5L351.7 220.3L353.2 221.5L354.7 220.3L356.2 221.5L357.7 220.3L359.2 221.5L360.7 220.3L362.2 221.5L363.7 220.3L365.2 221.5L366.7 220.3L368.2 221.5L369.7 220.3L371.2 221.5L372.7 220.3L374.2 221.5L375.7 220.3L377.2 221.5L378.7 220.3L380.2 221.5L381.7 220.3L383.2 221.5L384.7 220.3L386.2 221.5L387.7 220.3L389.2 221.5L390.7 220.3L392.2 221.5L393.7 220.3L395.2 221.5L396.7 220.3L398.2 221.5L399.7 220.3L401.2 221.5L402.7 220.3L403.5 221.5 M420.9 220.9L422.4 220.3L423.9 221.5L425.4 220.3L426.9 221.5L428.4 220.3L429.9 221.5L431.4 220.3L432.9 221.5L434.4 220.3L435.9 221.5L437.4 220.3L438.9 221.5L440.4 220.3L441.9 221.5L443.4 220.3L444.9 221.5L446.4 220.3L447.9 221.5L449.4 220.3L450.9 221.5L452.4 220.3L453.9 221.5L455.4 220.3L456.9 221.5L458.4 220.3L459.9 221.5L461.4 220.3L462.5 221.5 M286.3 233.7L287.8 233.1L289.3 234.3L290.8 233.1L292.3 234.3L293.8 233.1L295.3 234.3L296.8 233.1L297.2 234.3 M299.4 233.7L300.9 233.1L302.4 234.3L303.9 233.1L305.4 234.3L306.9 233.1L308.4 234.3L309.9 233.1L311.4 234.3L312.9 233.1L314.4 234.3L315.9 233.1L317.4 234.3L318.9 233.1L320.4 234.3L321.9 233.1L323.4 234.3L324.9 233.1L326.4 234.3L327.9 233.1L329.4 234.3L330.9 233.1L332.4 234.3L333.9 233.1L335.4 234.3L336.9 233.1L338.4 234.3L339.9 233.1L341.3 234.3 M344.2 233.7L345.7 233.1L347.2 234.3L348.7 233.1L350.2 234.3L351.7 233.1L353.2 234.3L354.7 233.1L356.2 234.3L357.7 233.1L359.2 234.3L360.7 233.1L362.2 234.3L363.7 233.1L365.2 234.3L366.7 233.1L368.2 234.3L369.7 233.1L371.2 234.3L372.7 233.1L374.2 234.3L375.7 233.1L377.2 234.3L378.7 233.1L380.2 234.3L381.7 233.1L383.2 234.3L384.7 233.1L386.2 234.3L387.6 233.1" fill="none" stroke="#e0393e" stroke-width="0.65"/>
<g font-family="Liberation Sans" font-weight="700" font-size="53.5" fill="#2f6586"><text transform="translate(560.1,219.97) rotate(-90) scale(0.726,1)">S</text><text transform="translate(560.1,192.30) rotate(-90) scale(0.748,1)">E</text><text transform="translate(560.1,163.50) rotate(-90) scale(0.774,1)">R</text><text transform="translate(560.1,128.54) rotate(-90) scale(0.825,1)">V</text><text transform="translate(560.1,96.45) rotate(-90) scale(0.761,1)">I</text><text transform="translate(560.1,82.87) rotate(-90) scale(0.782,1)">C</text><text transform="translate(560.1,50.91) rotate(-90) scale(0.724,1)">E</text><text transform="translate(560.1,23.91) rotate(-90) scale(0.757,1)">S</text></g>
</g>
 </svg>
</div>

<!-- slide -->



<!-- status bar content -->
<div class="t" style="left:6.5px;top:457.5px;font-size:7.7px;color:#444">Slide 2 of 16</div>
<div class="t" style="left:71.8px;top:457.5px;font-size:7.7px;color:#444">English (United States)</div>
<div class="t" style="left:480.4px;top:457.5px;font-size:7.9px;color:#444">Notes</div>
<div class="a" style="left:514.6px;top:454px;width:26.7px;height:15px;background:#c8c8c8"></div>
<div class="t" style="left:723.6px;top:457.5px;font-size:7.9px;color:#444">64%</div>
<svg style="left:0;top:0" width="768" height="470">
 <g fill="none" stroke="#444" stroke-width="0.9">
  <path d="M468.5 463.5h10M469.5 461.5h8M470.5 459.5h6M472.5 457.5l1-1l1 1"/>
  <path d="M523.5 458h9.5v7.5h-9.5zM525.5 458v7.5M527.5 459.5h4v3h-4zM525.5 464h7.5" stroke="#333"/>
  <path d="M550.8 458.2h3.3v2.8h-3.3zM556 458.2h3.3v2.8h-3.3zM550.8 462.6h3.3v2.8h-3.3zM556 462.6h3.3v2.8h-3.3z"/>
  <path d="M578.5 458h7.7v7.5h-7.7zM582.3 458v7.5M580 459.5v4.5M584.7 459.5v4.5" />
  <path d="M605.5 458h8.5M606.3 458v5h7v-5M609.8 463v2.5M607.5 465.8h4.6M608 460.3h3.5"/>
  <path d="M628 461h5"/>
  <path d="M709 461h5.5M711.8 458.2v5.6"/>
  <path d="M749 458.3h5.6v5.4h-5.6z" stroke-width="0.8"/><path d="M745.8 461l1.8-1.6v3.2zM757.8 461l-1.8-1.6v3.2zM751.8 455.2l-1.6 1.8h3.2zM751.8 466.8l-1.6-1.8h3.2z" fill="#555" stroke="none"/>
 </g>
 <path d="M637 461h68" stroke="#c4c4c4" stroke-width="1"/>
 <path d="M671.5 459v4" stroke="#999" stroke-width="0.6"/>
 <rect x="656.8" y="456.5" width="3.2" height="8.5" fill="#666"/>
</svg>

</body></html>
